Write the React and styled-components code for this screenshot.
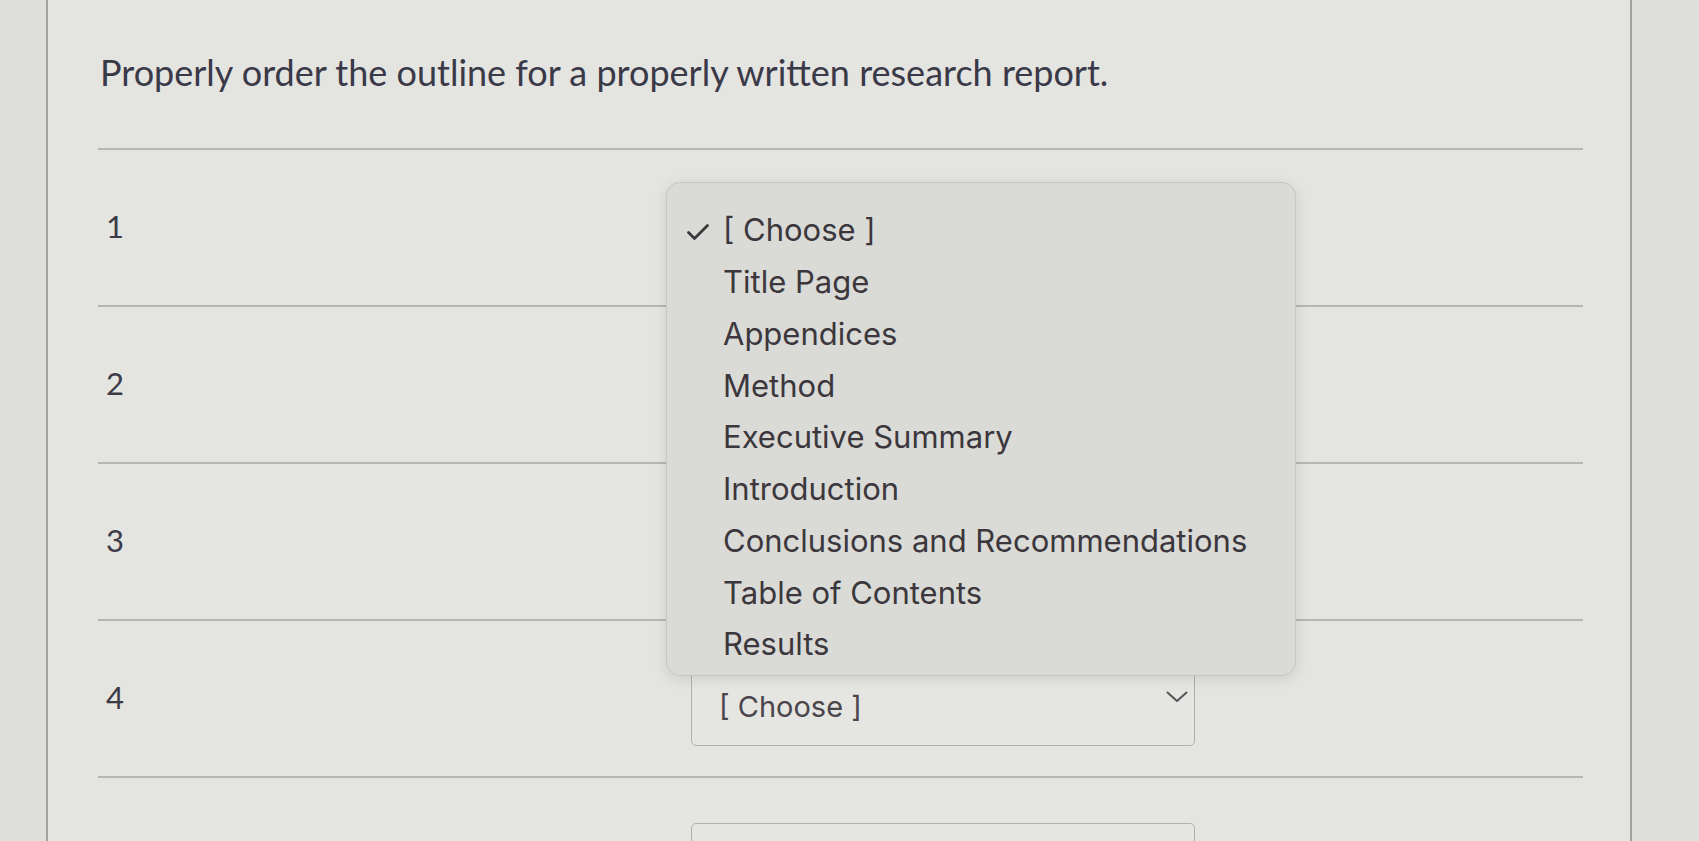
import React from "react";
import styled, { createGlobalStyle } from "styled-components";

const slots = [1, 2, 3, 4, 5];

const options = [
  "[ Choose ]",
  "Title Page",
  "Appendices",
  "Method",
  "Executive Summary",
  "Introduction",
  "Conclusions and Recommendations",
  "Table of Contents",
  "Results",
];

const Check = () => (
  <svg width="24" height="18" viewBox="0 0 24 18" fill="none">
    <path d="M2.5 9.5 L8.5 15.5 L21.5 2.5" stroke="#3b383d" strokeWidth="2.8" strokeLinecap="round" strokeLinejoin="round" />
  </svg>
);

const Chevron = () => (
  <svg width="22" height="12" viewBox="0 0 22 12" fill="none">
    <path d="M1.5 1.5 L11 10 L20.5 1.5" stroke="#56545a" strokeWidth="2" strokeLinecap="round" strokeLinejoin="round" />
  </svg>
);

const App = () => {
  return (
    <Page>
      <GlobalStyle />
      <Card>
        <Header>
          <Title>Properly order the outline for a properly written research report.</Title>
        </Header>
        <Form>
          {slots.map((n) => (
            <Row key={n}>
              <Label>{n}</Label>
              <Select>
                <SelectText>[ Choose ]</SelectText>
                <ChevronBox>
                  <Chevron />
                </ChevronBox>
              </Select>
            </Row>
          ))}
          <Menu>
            {options.map((opt, idx) => (
              <MenuItem key={opt}>
                <CheckSlot>{idx === 0 && <Check />}</CheckSlot>
                {opt}
              </MenuItem>
            ))}
          </Menu>
        </Form>
      </Card>
    </Page>
  );
};

export default App;

const GlobalStyle = createGlobalStyle`
  html, body {
    margin: 0;
    height: 100%;
  }
  body {
    background: #dfdfdb;
    font-family: Lato, "Open Sans", sans-serif;
    overflow: hidden;
  }
`;

const Page = styled.div`
  display: flex;
  height: 841px;
  padding-left: 46px;
  box-sizing: border-box;
  overflow: hidden;
`;

const Card = styled.div`
  width: 1586px;
  box-sizing: border-box;
  border-left: 2px solid #a2a2a0;
  border-right: 2px solid #a2a2a0;
  background: #e4e4e0;
  padding: 0 47px 0 50px;
`;

const Header = styled.div`
  padding: 51px 0 55px;
  border-bottom: 2px solid #b6b6b2;
`;

const Title = styled.h1`
  margin: 0;
  font-size: 36px;
  line-height: 42px;
  font-weight: 400;
  color: #3a3948;
  padding-left: 2px;
`;

const Form = styled.div`
  position: relative;
`;

const Row = styled.div`
  display: grid;
  grid-template-columns: 585px 504px;
  height: 157px;
  box-sizing: border-box;
  padding-left: 8px;
  border-bottom: 2px solid #b6b6b2;
`;

const Label = styled.div`
  margin-top: 58px;
  font-size: 31px;
  line-height: 36px;
  color: #3b3a46;
`;

const Select = styled.div`
  margin-top: 45px;
  height: 80px;
  box-sizing: border-box;
  border: 1.5px solid #b0b0ac;
  border-radius: 5px;
  background: #e5e5e1;
  display: flex;
  align-items: center;
  justify-content: space-between;
  padding: 0 6px 0 27px;
`;

const SelectText = styled.span`
  font-family: Inter, "Noto Sans", sans-serif;
  font-size: 29px;
  color: #4a464c;
`;

const ChevronBox = styled.span`
  align-self: flex-start;
  display: flex;
  margin-top: 24px;
`;

const Menu = styled.div`
  position: absolute;
  left: 568px;
  top: 32px;
  width: 630px;
  height: 494px;
  box-sizing: border-box;
  padding: 21px 0 8px;
  background: #dadad7;
  border: 1px solid #c6c6c2;
  border-radius: 14px;
  box-shadow: 0 3px 14px rgba(0, 0, 0, 0.1);
`;

const MenuItem = styled.div`
  display: flex;
  align-items: center;
  height: 51.75px;
  padding-left: 19px;
  font-family: Inter, "Noto Sans", sans-serif;
  font-size: 31px;
  color: #3b373c;
  white-space: nowrap;
`;

const CheckSlot = styled.span`
  display: flex;
  align-items: center;
  width: 37px;
  padding-top: 4px;
`;
